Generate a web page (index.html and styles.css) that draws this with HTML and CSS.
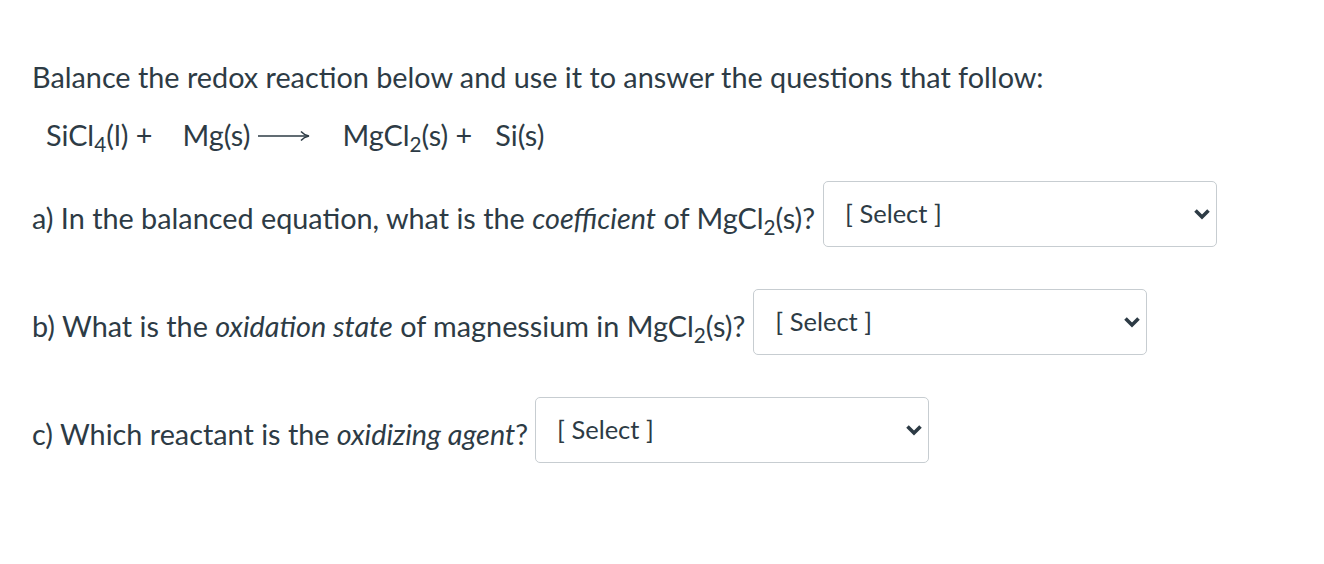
FILE: index.html
```html
<!DOCTYPE html>
<html>
<head>
<meta charset="utf-8">
<link rel="stylesheet" href="styles.css">
</head>
<body>
<div class="page">
  <p class="intro">Balance the redox reaction below and use it to answer the questions that follow:</p>
  <div class="equation">
    <span class="term t1">SiCl<sub>4</sub>(l) +</span>
    <span class="term t2">Mg(s)</span>
    <svg class="arrow" viewBox="0 0 52 14" width="52" height="14"><path d="M0 7 H50" stroke="#2d3b45" stroke-width="1.6" fill="none"/><path d="M43 2.5 Q46 6 51 7 Q46 8 43 11.5" stroke="#2d3b45" stroke-width="1.4" fill="none"/></svg>
    <span class="term t3">MgCl<sub>2</sub>(s) +</span>
    <span class="term t4">Si(s)</span>
  </div>
  <div class="question qa">
    <span class="qtext">a) In the balanced equation, what is the <em>coefficient</em> of MgCl<sub>2</sub>(s)?</span>
    <div class="select"><span class="sel-label">[ Select ]</span><svg class="chev" viewBox="0 0 18 12" width="18" height="12"><path d="M2.5 2.5 L9 9 L15.5 2.5" fill="none" stroke="#2d3b45" stroke-width="3.6"/></svg></div>
  </div>
  <div class="question qb">
    <span class="qtext">b) What is the <em>oxidation state</em> of magnessium in MgCl<sub>2</sub>(s)?</span>
    <div class="select"><span class="sel-label">[ Select ]</span><svg class="chev" viewBox="0 0 18 12" width="18" height="12"><path d="M2.5 2.5 L9 9 L15.5 2.5" fill="none" stroke="#2d3b45" stroke-width="3.6"/></svg></div>
  </div>
  <div class="question qc">
    <span class="qtext">c) Which reactant is the <em>oxidizing agent</em>?</span>
    <div class="select"><span class="sel-label">[ Select ]</span><svg class="chev" viewBox="0 0 18 12" width="18" height="12"><path d="M2.5 2.5 L9 9 L15.5 2.5" fill="none" stroke="#2d3b45" stroke-width="3.6"/></svg></div>
  </div>
</div>
</body>
</html>
```
FILE: styles.css
```css
html, body {
  margin: 0;
  padding: 0;
  background: #ffffff;
}
body {
  font-family: Lato, "Open Sans", sans-serif;
  color: #2d3b45;
  font-size: 28.8px;
}
.page {
  padding: 58px 0 0 32px;
}
.intro {
  margin: 0;
  line-height: 38px;
}
.equation {
  display: flex;
  align-items: center;
  height: 46px;
  margin-top: 16px;
  padding-left: 14px;
}
sub {
  font-size: 0.72em;
  vertical-align: -0.3em;
  line-height: 0;
}
.t2 { margin-left: 30px; }
.arrow {
  margin-left: 8px;
  margin-top: 2px;
  display: block;
}
.t3 { margin-left: 32px; }
.t4 { margin-left: 23px; }
.question {
  display: flex;
  align-items: center;
  height: 66px;
}
.qa { margin-top: 23px; }
.qb, .qc { margin-top: 42px; }
.qtext {
  padding-top: 7px;
}
.select {
  margin-left: 8px;
  border: 1px solid #c7cdd1;
  border-radius: 5px;
  display: flex;
  align-items: center;
  justify-content: space-between;
  padding: 0 5px 0 21px;
  box-sizing: border-box;
  width: 394px;
  height: 66px;
}
.qc .select { margin-left: 7px; }
.sel-label {
  font-size: 25.5px;
  margin-top: -2px;
}
.chev {
  display: block;
}
```
